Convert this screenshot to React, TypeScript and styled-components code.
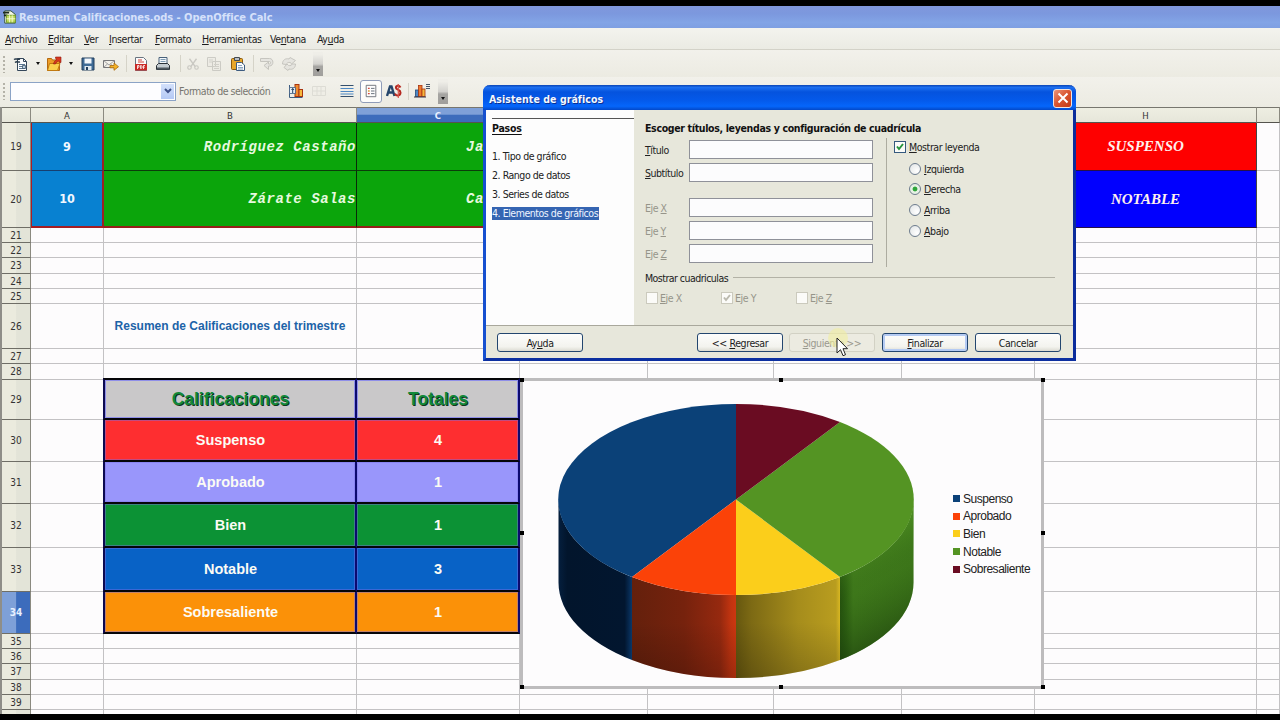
import React from "react";
import styled, { createGlobalStyle, css } from "styled-components";

const UI = `"DejaVu Sans Condensed", "DejaVu Sans", sans-serif`;
const ARIAL = `"Liberation Sans", sans-serif`;

const Global = createGlobalStyle`
  * { box-sizing: border-box; }
  html, body { margin: 0; padding: 0; background: #000; }
  body { font-family: ${UI}; font-stretch: condensed; font-size: 10px; color: #222; overflow: hidden; }
`;

const Screen = styled.div`
  position: relative;
  width: 1280px;
  height: 720px;
  padding: 6px 0;
  background: #000;
  overflow: hidden;
  display: flex;
  flex-direction: column;
`;

/* ---------- window chrome ---------- */

const TitleBar = styled.div`
  height: 22px;
  flex: none;
  display: flex;
  align-items: center;
  gap: 2px;
  padding-left: 3px;
  background: linear-gradient(#7f97dc, #7c98de 35%, #82a4e6 75%, #7e9fe2);
`;
const WindowTitle = styled.span`
  font: bold 11px ${UI};
  font-stretch: condensed;
  letter-spacing: -0.03px;
  color: #d6e1fa;
`;

const MenuBar = styled.div`
  height: 22px;
  flex: none;
  display: flex;
  align-items: center;
  gap: 11px;
  padding: 0 0 0 5px;
  background: linear-gradient(#f3f3ee, #ebebe3);
  border-bottom: 1px solid #d3d2c8;
`;
const MenuItem = styled.span<{ $w: number }>`
  width: ${(p) => p.$w}px;
  white-space: nowrap;
  font-size: 10.5px;
  letter-spacing: -0.4px;
  color: #1c1c1c;
`;
const Key = styled.span`
  text-decoration: underline;
  text-underline-offset: 1px;
`;

const Bar = styled.div<{ $h: number }>`
  height: ${(p) => p.$h}px;
  flex: none;
  display: flex;
  align-items: center;
  background: linear-gradient(#f2f1eb, #ecebe2);
`;
const FormatBar = styled(Bar)`
  padding-bottom: 2px;
`;
const Slot = styled.div<{ $w: number; $off?: boolean }>`
  width: ${(p) => p.$w}px;
  height: 100%;
  flex: none;
  display: flex;
  align-items: center;
  justify-content: center;
  opacity: ${(p) => (p.$off ? 0.55 : 1)};
`;
const Grip = styled.div`
  width: 8px;
  flex: none;
  height: 18px;
  background: radial-gradient(circle at 4px 2px, #b4b2a8 1px, transparent 1.2px) 0 0 / 8px 4px;
`;
const Divider = styled.div`
  width: 1px;
  height: 17px;
  background: #d5d3c8;
`;
const Caret = styled.div`
  border: 2.5px solid transparent;
  border-top: 3px solid #111;
  border-bottom: 0;
`;
const Overflow = styled.div`
  width: 10px;
  flex: none;
  align-self: stretch;
  margin: 2px 0 1px;
  display: flex;
  align-items: flex-end;
  justify-content: center;
  padding-bottom: 4px;
  background: linear-gradient(#efeee8 10%, #d3d2ce 50%, #a6a5a2 60%, #a09f9c);
`;
const Combo = styled.div`
  width: 166px;
  height: 19px;
  flex: none;
  margin-left: 2px;
  margin-right: 1px;
  display: flex;
  justify-content: flex-end;
  padding: 1px;
  background: #fdfdff;
  border: 1px solid #8ba3c6;
`;
const ComboButton = styled.div`
  width: 13px;
  display: grid;
  place-items: center;
  background: linear-gradient(#d3e0fb, #b4c9f4);
`;
const BarText = styled.span`
  width: 106px;
  flex: none;
  padding-left: 2px;
  white-space: nowrap;
  font-size: 10.5px;
  letter-spacing: -0.48px;
  color: #77766f;
`;
const Pressed = styled.div`
  width: 22px;
  height: 23px;
  flex: none;
  display: grid;
  place-items: center;
  background: #fdfdfb;
  border: 1px solid #8f9cb8;
  border-radius: 3px;
`;

/* ---------- sheet ---------- */

const Sheet = styled.div`
  flex: 1;
  min-height: 0;
  overflow: hidden;
  border-left: 2px solid #8f8e88;
  background: #fdfcfd;
`;
const Line = styled.div<{ $h: number }>`
  display: grid;
  grid-template-columns: 29px 73px 253px 163px 128px 126px 128px 133px 222px 1fr;
  height: ${(p) => p.$h}px;
`;
const headFace = css`
  background: linear-gradient(#eeeee2, #e6e6da);
`;
const ColHead = styled.div<{ $on?: boolean }>`
  ${headFace}
  border-top: 1px solid #77766e;
  border-right: 1px solid #8b8a80;
  border-bottom: 1px solid #55544e;
  display: grid;
  place-items: center;
  color: #333;
  font-size: 9.5px;
  ${(p) =>
    p.$on &&
    css`
      background: linear-gradient(#7ea0d8 45%, #3c6cbc 50%);
      color: #e8f0ff;
      font-weight: bold;
    `}
`;
const RowHead = styled.div<{ $on?: boolean }>`
  background: linear-gradient(90deg, #ebebde 50%, #e3e4d8 52%);
  border-right: 1px solid #8b8a80;
  border-bottom: 1px solid #6f6e66;
  display: grid;
  place-items: center;
  color: #333;
  font-size: 10px;
  ${(p) =>
    p.$on &&
    css`
      background: linear-gradient(90deg, #7ea0d8 50%, #3c6cbc 52%);
      color: #e8f0ff;
      font-weight: bold;
    `}
`;
const Cell = styled.div`
  border-right: 1px solid #c3c2c4;
  border-bottom: 1px solid #c3c2c4;
  display: flex;
  align-items: center;
  justify-content: center;
  white-space: nowrap;
  min-width: 0;
`;
const NumberCell = styled(Cell)<{ $last: boolean }>`
  background: #0881d1;
  border-left: 1px solid #b01c24;
  border-right: 2px solid #9c2026;
  border-bottom: ${(p) => (p.$last ? "2px solid #a51d22" : "1px solid #163f70")};
  color: #f2f8ff;
  font-weight: bold;
  font-size: 12.5px;
`;
const NameCell = styled(Cell)<{ $last: boolean }>`
  background: #0ba50b;
  border-right: 1px solid #0a2a0a;
  border-bottom: ${(p) => (p.$last ? "2px solid #96201a" : "1px solid #0b3d0b")};
  justify-content: flex-end;
  color: #e6f9df;
  font: italic bold 14px "Liberation Mono", monospace;
  letter-spacing: 0.55px;
`;
const ClippedName = styled(NameCell)`
  justify-content: flex-start;
  padding-left: 109px;
`;
const GradeCell = styled(Cell)<{ $bg: string }>`
  background: ${(p) => p.$bg};
  border-bottom: 1px solid #25104a;
  border-right: 1px solid #444;
  color: #fff0ee;
  font: italic bold 15px "Liberation Serif", serif;
`;
const Caption = styled(Cell)`
  color: #1c63a8;
  font: bold 12px ${ARIAL};
`;
const TableCell = styled(Cell)<{ $bg: string; $first?: boolean }>`
  background: ${(p) => p.$bg};
  border-right: 2px solid #0c0a6e;
  border-bottom: 2px solid #050508;
  padding-left: 1px;
  ${(p) => p.$first && css`border-left: 2px solid #0c0a50; margin-left: -1px;`}
  box-shadow: inset 0 0 0 1px rgba(120, 110, 230, 0.45);
  color: #fbfbf4;
  font: bold 14.5px ${ARIAL};
`;
const TableHead = styled(TableCell)`
  border-top: 2px solid #050508;
  margin-top: -2px;
  box-shadow: inset 0 0 0 1px #8f8fe8;
  color: #11893a;
  font-size: 17.5px;
  text-shadow: 1px 1px 0 #14331d;
`;

/* ---------- embedded chart ---------- */

const ChartFrame = styled.div`
  position: absolute;
  left: 520px;
  top: 378px;
  width: 524px;
  height: 311px;
  background: #fdfcfd;
  border: 3px solid #bdbcbd;
  display: flex;
`;
const Handle = styled.i<{ $x: number; $y: number }>`
  position: absolute;
  width: 4px;
  height: 4px;
  background: #000;
  left: ${(p) => p.$x}px;
  top: ${(p) => p.$y}px;
`;
const PieArea = styled.svg`
  width: 430px;
  height: 305px;
  flex: none;
`;
const Legend = styled.div`
  display: flex;
  flex-direction: column;
  padding-top: 109px;
`;
const LegendItem = styled.div`
  height: 17.6px;
  display: flex;
  align-items: center;
  gap: 3px;
  font: 12px ${ARIAL};
  letter-spacing: -0.48px;
  color: #222;
`;
const Swatch = styled.span<{ $c: string }>`
  width: 7px;
  height: 7px;
  background: ${(p) => p.$c};
`;

/* ---------- wizard dialog ---------- */

const Dialog = styled.div`
  position: absolute;
  left: 483px;
  top: 85px;
  width: 593px;
  height: 276px;
  display: flex;
  flex-direction: column;
  background: #e7e7db;
  border: 3px solid #0a40c4;
  border-left-color: #1650d0;
  border-top: 0;
  border-bottom-color: #0c2fa0;
  border-right-color: #0b2c9c;
  border-radius: 7px 7px 0 0;
`;
const DialogTitle = styled.div`
  height: 25px;
  flex: none;
  margin: 0 -3px;
  padding: 2px 4px 0 6px;
  display: flex;
  align-items: center;
  justify-content: space-between;
  color: #f4f8ff;
  font-weight: bold;
  font-size: 10.5px;
  letter-spacing: 0.06px;
  text-shadow: 1px 1px 0 #0a2e92;
  border-radius: 7px 7px 0 0;
  background: linear-gradient(#0b45b5, #1c6ff0 10%, #0553de 28%, #0459ea 60%, #0566fb 85%, #0348c8);
`;
const Close = styled.div`
  width: 19px;
  height: 19px;
  margin-bottom: 1px;
  border: 1px solid #f2e4e0;
  border-radius: 3px;
  display: grid;
  place-items: center;
  background: linear-gradient(135deg, #eb9478, #d9532f 50%, #c23a16);
`;
const DialogBody = styled.div`
  height: 216px;
  flex: none;
  display: flex;
  border-bottom: 1px solid #a9a89c;
`;
const Steps = styled.div`
  width: 148px;
  flex: none;
  background: #fdfdfd;
  padding: 8px 0 0 6px;
`;
const StepsTitle = styled.div`
  border-top: 1px solid #555;
  height: 32px;
  padding-top: 3px;
  font-weight: bold;
  font-size: 10.5px;
  letter-spacing: -0.2px;
  text-decoration: underline;
  text-underline-offset: 2px;
  color: #111;
`;
const Step = styled.div<{ $on?: boolean }>`
  height: 13px;
  line-height: 13px;
  margin-bottom: 6px;
  width: ${(p) => (p.$on ? "107px" : "auto")};
  white-space: nowrap;
  font-size: 10.5px;
  letter-spacing: -0.46px;
  background: ${(p) => (p.$on ? "#3565b2" : "none")};
  color: ${(p) => (p.$on ? "#eef4ff" : "#222")};
`;
const Panel = styled.div`
  flex: 1;
  padding: 9px 0 0 11px;
`;
const PanelTitle = styled.div`
  height: 19px;
  line-height: 19px;
  font-weight: bold;
  font-size: 10.5px;
  letter-spacing: -0.34px;
  color: #111;
  white-space: nowrap;
`;
const Columns = styled.div`
  display: flex;
  height: 129px;
`;
const Fields = styled.div`
  width: 228px;
  padding-top: 2px;
`;
const Field = styled.div<{ $gap: number; $off?: boolean }>`
  display: flex;
  align-items: center;
  height: 19px;
  margin-bottom: ${(p) => p.$gap}px;
  font-size: 10.5px;
  letter-spacing: -0.46px;
  color: ${(p) => (p.$off ? "#96958a" : "#222")};
`;
const FieldName = styled.span`
  width: 44px;
  white-space: nowrap;
`;
const Input = styled.div`
  width: 184px;
  height: 19px;
  background: #fcfcfd;
  border: 1px solid #8f9199;
`;
const VRule = styled.div`
  width: 1px;
  margin-left: 13px;
  background: #adaca0;
`;
const Options = styled.div`
  padding: 0 0 0 7px;
`;
const Choice = styled.div<{ $h: number; $indent?: number; $off?: boolean; $w?: number }>`
  display: flex;
  align-items: center;
  gap: ${(p) => (p.$off ? 2 : 3)}px;
  height: ${(p) => p.$h}px;
  width: ${(p) => (p.$w ? p.$w + "px" : "auto")};
  padding-left: ${(p) => p.$indent || 0}px;
  font-size: 10.5px;
  letter-spacing: -0.42px;
  white-space: nowrap;
  color: ${(p) => (p.$off ? "#96958a" : "#222")};
`;
const Check = styled.span<{ $off?: boolean }>`
  width: 12px;
  height: 12px;
  display: grid;
  place-items: center;
  background: #fbfbf8;
  border: 1px solid ${(p) => (p.$off ? "#cbcabd" : "#35597e")};
`;
const Radio = styled.span<{ $on?: boolean }>`
  width: 12px;
  height: 12px;
  border-radius: 50%;
  border: 1px solid #6d7c8e;
  background: ${(p) =>
    p.$on
      ? "radial-gradient(circle, #2fa63a 0 2px, #e6f1e4 2.8px)"
      : "radial-gradient(circle at 70% 70%, #fff, #dfe3e4)"};
`;
const Group = styled.div`
  display: flex;
  align-items: center;
  gap: 5px;
  height: 21px;
  margin-right: 18px;
  font-size: 10.5px;
  letter-spacing: -0.53px;
  white-space: nowrap;
  &::after {
    content: "";
    flex: 1;
    height: 1px;
    background: #b3b2a6;
  }
`;
const GridChecks = styled.div`
  display: flex;
  height: 20px;
  padding-left: 1px;
`;
const Footer = styled.div`
  flex: 1;
  display: flex;
  align-items: center;
  padding: 1px 0 0 11px;
`;
const Button = styled.div<{ $ml?: number; $kind?: "off" | "default" }>`
  width: 86px;
  height: 19px;
  margin-left: ${(p) => p.$ml || 0}px;
  display: flex;
  align-items: center;
  justify-content: center;
  white-space: pre;
  font-size: 10.5px;
  letter-spacing: -0.4px;
  border-radius: 3px;
  border: 1px solid #23466f;
  color: #1c1c1c;
  background: linear-gradient(#fdfdfc, #f3f3ee 75%, #dcdbd2);
  ${(p) =>
    p.$kind === "off" &&
    css`
      border-color: #d2d1c4;
      background: #ecebe1;
      color: #9a998e;
    `}
  ${(p) => p.$kind === "default" && css`box-shadow: inset 0 0 0 2px #b5cbf3;`}
`;

const Pointer = styled.svg`
  position: absolute;
  left: 820px;
  top: 322px;
  width: 36px;
  height: 36px;
`;

/* ---------- icons ---------- */

const Icon = ({ children, s = 16 }: { children: React.ReactNode; s?: number }) => (
  <svg width={s} height={s} viewBox="0 0 16 16" fill="none">{children}</svg>
);
const CalcIcon = () => (
  <Icon s={14}>
    <path d="M2 1h7l5 4v10H2z" fill="#f4f8e4" stroke="#2c4a2a" />
    <path d="M0 3h7M1 6h4" stroke="#1d2b1d" strokeWidth="2" />
    <rect x="4" y="6" width="10" height="8" fill="#c4dd62" stroke="#6f9c20" />
    <path d="M4 10h10M7.500 6v8M10.500 6v8" stroke="#f6fbd8" />
  </Icon>
);
const NewIcon = () => (
  <Icon>
    <path d="M4.500 2.500h6l3 3v9h-9z" fill="#fbfcfd" stroke="#34475a" />
    <path d="M1 3.500c2-1.500 3 .5 6-.5M2 6.500c2-1.500 3 0 5-.5" stroke="#2b3c4c" strokeWidth="1.500" />
    <path d="M6 8.500h6M6 10.500h6M6 12.500h6" stroke="#5a7893" />
    <path d="M9.500 9.500h3v3h-3z" fill="#b8cfe2" stroke="#34475a" strokeWidth=".7" />
    <path d="M10.500 2.500v3h3" stroke="#34475a" />
  </Icon>
);
const OpenIcon = () => (
  <Icon>
    <path d="M1.500 14.500v-12h4l1 1.500h7v10.500z" fill="#ee9d28" stroke="#b4690e" />
    <path d="M1.500 14.500l2-7H14l-2.500 7z" fill="#fbd04c" stroke="#c17a10" />
    <path d="M7.500 8C8 5.500 9 4.500 10.500 4L9.500 2V1H15v5.500h-1L12.500 5C11 5.500 10 6.500 9.500 8z" fill="#d8381f" stroke="#8d1a10" strokeWidth=".6" />
  </Icon>
);
const SaveIcon = () => (
  <Icon>
    <path d="M2 2h12v12H2z" fill="#3f6b96" stroke="#223e5c" />
    <path d="M4.500 2.500h7v5h-7z" fill="#f2f6fa" />
    <path d="M4.500 10h7v4h-7z" fill="#dfe8ef" />
    <path d="M6 11h2v3H6z" fill="#223e5c" />
  </Icon>
);
const MailIcon = () => (
  <Icon>
    <path d="M.5 4.500h11v7H.5z" fill="#f3f1ea" stroke="#77777a" />
    <path d="M.5 4.500L6 9l5.500-4.500M.5 11.500L4.500 8M11.500 11.500L7.500 8" stroke="#8e8e90" strokeWidth=".8" />
    <path d="M7 9.500h4V7l4.500 3.700-4.500 3.600v-2.500H7z" fill="#f5b327" stroke="#a9690d" strokeWidth=".8" />
  </Icon>
);
const PdfIcon = () => (
  <Icon>
    <path d="M2.500 1.500h8l3 3v10h-11z" fill="#fbfbfb" stroke="#6a7480" />
    <path d="M5 4h4M5 6h6" stroke="#d2463a" />
    <rect x="2" y="8" width="12" height="6.500" fill="#c92a26" />
    <path d="M4.500 13V9.500H6v1.700H4.500M7.500 9.500h.6c1.400 0 1.400 3 0 3h-.6zM10.500 13V9.500H12M10.500 11.200h1.300" stroke="#fff" strokeWidth=".8" />
  </Icon>
);
const PrintIcon = () => (
  <Icon>
    <path d="M4 1.500h8v7H4z" fill="#f4f8fb" stroke="#48617a" />
    <path d="M5.500 3.500h5M5.500 5.500h5" stroke="#7d9ab2" />
    <path d="M1.500 9.500L3.500 7.500h9l2 2v4h-13z" fill="#c3cbd0" stroke="#2b3238" />
    <path d="M2 11.500h12v2H2z" fill="#4d575e" />
  </Icon>
);
const CutIcon = () => (
  <Icon>
    <path d="M4 2l6.500 9M12 2L5.500 11" stroke="#aaa9a4" strokeWidth="1.500" />
    <circle cx="4" cy="12" r="2" stroke="#aaa9a4" strokeWidth="1.300" />
    <circle cx="12" cy="12" r="2" stroke="#aaa9a4" strokeWidth="1.300" />
  </Icon>
);
const CopyIcon = () => (
  <Icon>
    <path d="M1.500 1.500h8v9h-8zM6.500 5.500h8v9h-8z" fill="#eceae4" stroke="#b1b0aa" />
    <path d="M3 4h4M3 6h3M8 8.500h5M8 10.500h5M8 12.500h5" stroke="#b9b8b2" />
  </Icon>
);
const PasteIcon = () => (
  <Icon>
    <rect x="1.500" y="2.500" width="11" height="11" rx="1" fill="#e8a72a" stroke="#8a5a10" />
    <path d="M4.500 1.500h5v3h-5z" fill="#b8bec4" stroke="#444b52" />
    <path d="M6.500 6.500h5l3 2.500v5.500h-8z" fill="#fafcfd" stroke="#3d5c80" />
    <path d="M8 9.500h4M8 11.500h5M8 13h5" stroke="#6d8eb0" strokeWidth=".8" />
  </Icon>
);
const UndoIcon = () => (
  <Icon>
    <path d="M1.500 2.500h9c4.500 0 4.500 7.500 0 7.500h-1v3.500L5 9.500 9.500 6v2h1c1.500 0 1.500-2.500 0-2.500h-9z" fill="#dedddA" stroke="#a5a49f" />
  </Icon>
);
const RedoIcon = () => (
  <Icon>
    <path d="M1.500 8c0-4 3-6 6.500-5l1-1.500 5.500 3-4 3.500-1-1.500C7 6 5.500 7 5.500 8.500zM14.500 8c0 4-3 6-6.500 5l-1 1.500-4-3 3-3.500 1.500 1.500c2 .5 3.500-.5 3.500-1.500z" fill="#dedddA" stroke="#a5a49f" />
  </Icon>
);
const ChartTypeIcon = () => (
  <Icon>
    <path d="M1.500 2v12.500h13" stroke="#3d5c80" />
    <rect x="7" y="1.500" width="4" height="12" fill="#ef8b2f" stroke="#a8340f" />
    <rect x="11" y="6.500" width="3.500" height="7" fill="#f6b83c" stroke="#a8340f" />
    <path d="M1.500 4.500h6v6h-6z" fill="#e8eff6" stroke="#3d5c80" strokeWidth=".8" />
    <path d="M3.500 7l1.200-1.500L6 7M4.700 5.500V10" stroke="#1c3d63" />
  </Icon>
);
const TableIcon = () => (
  <Icon>
    <path d="M1.500 3.500h13v9h-13zM1.500 8h13M6 3.500v9M10 3.500v9" stroke="#dddcd5" />
  </Icon>
);
const LinesIcon = () => (
  <Icon>
    <path d="M1.500 2.500h13M1.500 13.500h13" stroke="#34506e" />
    <path d="M1.500 5.500h13M1.500 8.500h13M1.500 11h13" stroke="#4d88c4" strokeWidth="1.200" />
  </Icon>
);
const LegendIcon = () => (
  <Icon s={14}>
    <path d="M2.500 1.500h11v13h-11z" fill="#fdfdfd" stroke="#666c74" />
    <path d="M4.500 5h2M4.500 11h2" stroke="#d2463a" strokeWidth="1.600" />
    <path d="M4.500 8h2" stroke="#d99a2c" strokeWidth="1.600" />
    <path d="M8 5h4M8 8h4M8 11h4" stroke="#55606c" />
  </Icon>
);
const ScaleTextIcon = () => (
  <Icon>
    <path d="M1 13L4 3.500h1.500L8.500 13M2.500 9.500h5" stroke="#25466b" strokeWidth="2.400" />
    <path d="M14.500 4.500C13 1.500 9.500 2.500 10 5c.4 2 4.500 1.500 4.500 4.500 0 3.500-4.500 4-5.500 1" stroke="#b5281f" strokeWidth="2" />
    <path d="M12.300 1v14" stroke="#d9574c" strokeWidth="1.200" />
  </Icon>
);
const ColumnsIcon = () => (
  <Icon>
    <rect x="1.500" y="7" width="3" height="6.500" fill="#4d88c4" stroke="#234a78" strokeWidth=".8" />
    <rect x="4.500" y="2.500" width="3.500" height="11" fill="#ef7a2f" stroke="#a8340f" strokeWidth=".8" />
    <rect x="8" y="6" width="3" height="7.500" fill="#f6b83c" stroke="#a8340f" strokeWidth=".8" />
    <path d="M0 14h12" stroke="#334" />
    <path d="M12 1.500h4M12 3.500h4M12 5.500h4" stroke="#45566a" />
  </Icon>
);

/* ---------- data ---------- */

const plain = (from: number, heights: number[]) => heights.map((h, i) => ({ n: from + i, h }));

const Blank = ({ count }: { count: number }) => (
  <>{Array.from({ length: count }, (_, i) => <Cell key={i} />)}</>
);

const EmptyRows = ({ rows }: { rows: { n: number; h: number }[] }) => (
  <>
    {rows.map((r) => (
      <Line key={r.n} $h={r.h}>
        <RowHead>{r.n}</RowHead>
        <Blank count={9} />
      </Line>
    ))}
  </>
);

const students = [
  { n: 19, h: 48, id: 9, surname: "Rodríguez Castaño", first: "Ja", grade: "SUSPENSO", bg: "#fe0000" },
  { n: 20, h: 57, id: 10, surname: "Zárate Salas", first: "Ca", grade: "NOTABLE", bg: "#0100fe" },
];

const totals = [
  { n: 30, h: 42, name: "Suspenso", count: 4, bg: "#fe2e30" },
  { n: 31, h: 42, name: "Aprobado", count: 1, bg: "#9996fb" },
  { n: 32, h: 44, name: "Bien", count: 1, bg: "#0c9235" },
  { n: 33, h: 44, name: "Notable", count: 3, bg: "#0862c6" },
  { n: 34, h: 42, name: "Sobresaliente", count: 1, bg: "#fb9108" },
];

const legend = [
  ["Suspenso", "#0b4178"],
  ["Aprobado", "#fb4208"],
  ["Bien", "#fbce1b"],
  ["Notable", "#549423"],
  ["Sobresaliente", "#6a0c22"],
];

const Pie = () => (
  <PieArea viewBox="523 381 430 305">
    <defs>
      <linearGradient id="wBlue"><stop offset="0" stopColor="#051f3e" /><stop offset=".12" stopColor="#02152c" /><stop offset=".9" stopColor="#02162f" /><stop offset="1" stopColor="#0a3768" /></linearGradient>
      <linearGradient id="wRed"><stop offset="0" stopColor="#64200c" /><stop offset=".5" stopColor="#76220d" /><stop offset=".85" stopColor="#96290f" /><stop offset=".95" stopColor="#c13410" /><stop offset="1" stopColor="#cc3710" /></linearGradient>
      <linearGradient id="wGold"><stop offset="0" stopColor="#66570f" /><stop offset=".15" stopColor="#7d6a14" /><stop offset=".6" stopColor="#a68d1c" /><stop offset=".96" stopColor="#b99d1f" /><stop offset="1" stopColor="#d8b722" /></linearGradient>
      <linearGradient id="wGreen"><stop offset="0" stopColor="#24500e" /><stop offset=".08" stopColor="#2e6212" /><stop offset=".18" stopColor="#417c1c" /><stop offset="1" stopColor="#3f7a1b" /></linearGradient>
      <linearGradient id="shade" x1="0" y1="0" x2="0.25" y2="1"><stop offset=".3" stopColor="#5aa028" stopOpacity=".5" /><stop offset=".6" stopColor="#2a5a10" stopOpacity=".15" /><stop offset="1" stopColor="#16350a" stopOpacity=".6" /></linearGradient>
      <linearGradient id="low" x1="0" y1="0" x2="0" y2="1"><stop offset=".45" stopColor="#000" stopOpacity="0" /><stop offset="1" stopColor="#000" stopOpacity=".2" /></linearGradient>
    </defs>
    <path d="M558.500 499.500A177.500 95.500 0 0 0 632 577V660A177.500 95.500 0 0 1 558.500 582.500Z" fill="url(#wBlue)" />
    <path d="M632 577A177.500 95.500 0 0 0 736 595V678A177.500 95.500 0 0 1 632 660Z" fill="url(#wRed)" />
    <path d="M736 595A177.500 95.500 0 0 0 840 577V660A177.500 95.500 0 0 1 736 678Z" fill="url(#wGold)" />
    <path d="M632 577A177.500 95.500 0 0 0 840 577V660A177.500 95.500 0 0 1 632 660Z" fill="url(#low)" />
    <path d="M840 577A177.500 95.500 0 0 0 913.500 499.500V582.500A177.500 95.500 0 0 1 840 660Z" fill="url(#wGreen)" />
    <path d="M840 577A177.500 95.500 0 0 0 913.500 499.500V582.500A177.500 95.500 0 0 1 840 660Z" fill="url(#shade)" />
    <path d="M736 499.500V404A177.500 95.500 0 0 0 632 577Z" fill="#0b4178" />
    <path d="M736 499.500L632 577A177.500 95.500 0 0 0 736 595Z" fill="#fb4208" />
    <path d="M736 499.500V595A177.500 95.500 0 0 0 840 577Z" fill="#fbce1b" />
    <path d="M736 499.500L840 577A177.500 95.500 0 0 0 840 422Z" fill="#549423" />
    <path d="M736 499.500L840 422A177.500 95.500 0 0 0 736 404Z" fill="#6a0c22" />
  </PieArea>
);

export default function App() {
  return (
    <>
      <Global />
      <Screen>
        <TitleBar>
          <CalcIcon />
          <WindowTitle>Resumen Calificaciones.ods - OpenOffice Calc</WindowTitle>
        </TitleBar>
        <MenuBar>
          <MenuItem $w={32}><Key>A</Key>rchivo</MenuItem>
          <MenuItem $w={25}><Key>E</Key>ditar</MenuItem>
          <MenuItem $w={14}><Key>V</Key>er</MenuItem>
          <MenuItem $w={35}><Key>I</Key>nsertar</MenuItem>
          <MenuItem $w={36}><Key>F</Key>ormato</MenuItem>
          <MenuItem $w={57}><Key>H</Key>erramientas</MenuItem>
          <MenuItem $w={36}>Ve<Key>n</Key>tana</MenuItem>
          <MenuItem $w={28}>Ay<Key>u</Key>da</MenuItem>
        </MenuBar>
        <Bar $h={27}>
          <Grip />
          <Slot $w={25}><NewIcon /></Slot>
          <Slot $w={9}><Caret /></Slot>
          <Slot $w={24}><OpenIcon /></Slot>
          <Slot $w={9}><Caret /></Slot>
          <Slot $w={26}><SaveIcon /></Slot>
          <Slot $w={20}><MailIcon /></Slot>
          <Slot $w={10}><Divider /></Slot>
          <Slot $w={20}><PdfIcon /></Slot>
          <Slot $w={24}><PrintIcon /></Slot>
          <Slot $w={11}><Divider /></Slot>
          <Slot $w={14} $off><CutIcon /></Slot>
          <Slot $w={28} $off><CopyIcon /></Slot>
          <Slot $w={20}><PasteIcon /></Slot>
          <Slot $w={10}><Divider /></Slot>
          <Slot $w={18} $off><UndoIcon /></Slot>
          <Slot $w={26} $off><RedoIcon /></Slot>
          <Slot $w={11} />
          <Overflow><Caret /></Overflow>
        </Bar>
        <FormatBar $h={30}>
          <Grip />
          <Combo>
            <ComboButton>
              <svg width="8" height="6" viewBox="0 0 8 6"><path d="M1 1l3 3 3-3" stroke="#3c4f86" strokeWidth="2" fill="none" /></svg>
            </ComboButton>
          </Combo>
          <BarText>Formato de selección</BarText>
          <Slot $w={25}><ChartTypeIcon /></Slot>
          <Slot $w={22}><TableIcon /></Slot>
          <Slot $w={6} />
          <Slot $w={22}><LinesIcon /></Slot>
          <Slot $w={2} />
          <Pressed><LegendIcon /></Pressed>
          <Slot $w={23}><ScaleTextIcon /></Slot>
          <Slot $w={7}><Divider /></Slot>
          <Slot $w={20}><ColumnsIcon /></Slot>
          <Slot $w={6} />
          <Overflow><Caret /></Overflow>
        </FormatBar>
        <Sheet>
          <Line $h={16}>
            <ColHead />
            <ColHead>A</ColHead>
            <ColHead>B</ColHead>
            <ColHead $on>C</ColHead>
            <ColHead />
            <ColHead />
            <ColHead />
            <ColHead />
            <ColHead>H</ColHead>
            <ColHead />
          </Line>
          {students.map((s) => (
            <Line key={s.n} $h={s.h}>
              <RowHead>{s.n}</RowHead>
              <NumberCell $last={s.n === 20}>{s.id}</NumberCell>
              <NameCell $last={s.n === 20}>{s.surname}</NameCell>
              <ClippedName $last={s.n === 20}>{s.first}</ClippedName>
              <Blank count={4} />
              <GradeCell $bg={s.bg}>{s.grade}</GradeCell>
              <Cell />
            </Line>
          ))}
          <EmptyRows rows={plain(21, [15, 15, 16, 15, 15])} />
          <Line $h={45}>
            <RowHead>26</RowHead>
            <Cell />
            <Caption>Resumen de Calificaciones del trimestre</Caption>
            <Blank count={7} />
          </Line>
          <EmptyRows rows={plain(27, [15, 16])} />
          <Line $h={40}>
            <RowHead>29</RowHead>
            <Cell />
            <TableHead $bg="#c9c8c9" $first>Calificaciones</TableHead>
            <TableHead $bg="#c9c8c9">Totales</TableHead>
            <Blank count={6} />
          </Line>
          {totals.map((t) => (
            <Line key={t.n} $h={t.h}>
              <RowHead $on={t.n === 34}>{t.n}</RowHead>
              <Cell />
              <TableCell $bg={t.bg} $first>{t.name}</TableCell>
              <TableCell $bg={t.bg}>{t.count}</TableCell>
              <Blank count={6} />
            </Line>
          ))}
          <EmptyRows rows={plain(35, [15, 15, 16, 15, 15])} />
          <Line $h={5}>
            <RowHead />
            <Blank count={9} />
          </Line>
        </Sheet>

        <ChartFrame>
          <Pie />
          <Legend>
            {legend.map(([name, color]) => (
              <LegendItem key={name}><Swatch $c={color} />{name}</LegendItem>
            ))}
          </Legend>
          {[-3, 256, 518].flatMap((x) =>
            [-3, 150, 304].filter((y) => !(x === 256 && y === 150)).map((y) => <Handle key={`${x}:${y}`} $x={x} $y={y} />)
          )}
        </ChartFrame>

        <Dialog>
          <DialogTitle>
            Asistente de gráficos
            <Close>
              <svg width="12" height="12" viewBox="0 0 12 12"><path d="M1.500 1.500l9 9M10.500 1.500l-9 9" stroke="#fff" strokeWidth="2" /></svg>
            </Close>
          </DialogTitle>
          <DialogBody>
            <Steps>
              <StepsTitle>Pasos</StepsTitle>
              <Step>1. Tipo de gráfico</Step>
              <Step>2. Rango de datos</Step>
              <Step>3. Series de datos</Step>
              <Step $on>4. Elementos de gráficos</Step>
            </Steps>
            <Panel>
              <PanelTitle>Escoger títulos, leyendas y configuración de cuadrícula</PanelTitle>
              <Columns>
                <Fields>
                  <Field $gap={4}><FieldName><Key>T</Key>ítulo</FieldName><Input /></Field>
                  <Field $gap={16}><FieldName><Key>S</Key>ubtítulo</FieldName><Input /></Field>
                  <Field $gap={4} $off><FieldName>Eje <Key>X</Key></FieldName><Input /></Field>
                  <Field $gap={4} $off><FieldName>Eje <Key>Y</Key></FieldName><Input /></Field>
                  <Field $gap={0} $off><FieldName>Eje <Key>Z</Key></FieldName><Input /></Field>
                </Fields>
                <VRule />
                <Options>
                  <Choice $h={18}>
                    <Check><svg width="8" height="8" viewBox="0 0 8 8"><path d="M1 3.500l2 2.500 4-5" stroke="#25933a" strokeWidth="2" fill="none" /></svg></Check>
                    <span><Key>M</Key>ostrar leyenda</span>
                  </Choice>
                  <Choice $h={26} $indent={15}><Radio /><span><Key>I</Key>zquierda</span></Choice>
                  <Choice $h={14} $indent={15}><Radio $on /><span><Key>D</Key>erecha</span></Choice>
                  <Choice $h={27} $indent={15}><Radio /><span><Key>A</Key>rriba</span></Choice>
                  <Choice $h={15} $indent={15}><Radio /><span><Key>A</Key>bajo</span></Choice>
                </Options>
              </Columns>
              <Group>Mostrar cuadriculas</Group>
              <GridChecks>
                <Choice $h={20} $w={75} $off><Check $off /><span><Key>E</Key>je X</span></Choice>
                <Choice $h={20} $w={75} $off>
                  <Check $off><svg width="8" height="8" viewBox="0 0 8 8"><path d="M1 3.500l2 2.500 4-5" stroke="#bbbaae" strokeWidth="2" fill="none" /></svg></Check>
                  <span>E<Key>j</Key>e Y</span>
                </Choice>
                <Choice $h={20} $w={75} $off><Check $off /><span>Eje <Key>Z</Key></span></Choice>
              </GridChecks>
            </Panel>
          </DialogBody>
          <Footer>
            <Button><span>Ay<Key>u</Key>da</span></Button>
            <Button $ml={114}><span>&lt;&lt; <Key>R</Key>egresar</span></Button>
            <Button $ml={6} $kind="off"><span><Key>S</Key>iguiente &gt;&gt;</span></Button>
            <Button $ml={7} $kind="default"><span><Key>F</Key>inalizar</span></Button>
            <Button $ml={7}>Cancelar</Button>
          </Footer>
        </Dialog>
        <Pointer viewBox="0 0 36 36">
          <circle cx="18" cy="16" r="10" fill="#f3ee9a" fillOpacity=".55" />
          <path d="M17 16v15l3.500-3.300 2.500 6 2.500-1-2.500-6h4.500z" fill="#fff" stroke="#222" />
        </Pointer>
      </Screen>
    </>
  );
}
